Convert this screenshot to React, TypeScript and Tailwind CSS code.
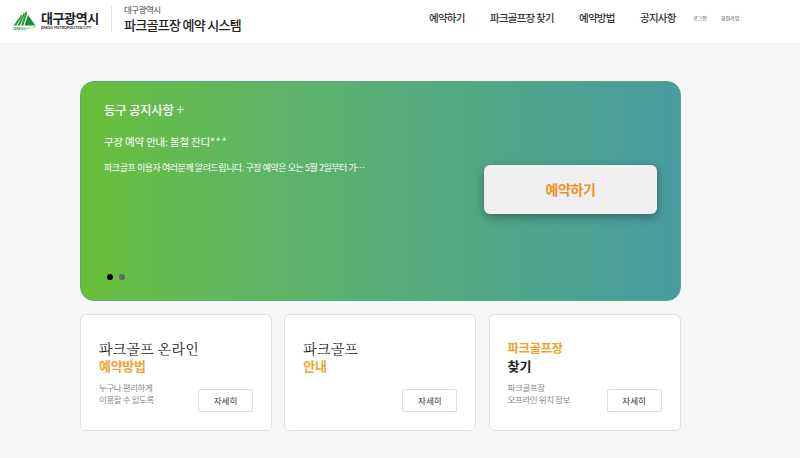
const KR = { fontFamily: '"Noto Sans CJK KR", "Noto Sans", sans-serif' };

function Logo() {
  return (
    <svg width="24" height="20" viewBox="0 0 24 20" className="shrink-0 mt-[-2px]">
      <path d="M0.5 14.5 L8.5 3.5 L9.5 4.5 L3.5 14.5 Z" fill="#2f9a40" />
      <path d="M4.5 14.5 L11 1.5 L12 3 L7 14.5 Z" fill="#2f9a40" />
      <path d="M8 14.5 L13 0 L14.2 2 L10.5 14.5 Z" fill="#2f9a40" />
      <path d="M11.5 14.5 L15 4 L22.5 14.5 Z" fill="#1f8a3a" />
      <path d="M14 17.5 Q20 17.5 23 15" stroke="#9cc84a" strokeWidth="0.8" fill="none" />
      <text x="0.5" y="19" fontSize="3.8" fontWeight="700" fill="#3b9a45" style={KR}>DAEGU</text>
    </svg>
  );
}

function Header() {
  const nav = ['예약하기', '파크골프장 찾기', '예약방법', '공지사항'];
  return (
    <header className="h-[43px] bg-white flex items-center pl-[13px]" style={KR}>
      <Logo />
      <div className="ml-[4px] flex flex-col w-[58px] mt-[-2px]">
        <span className="text-[13px] leading-[14px] font-bold text-[#222] tracking-[-0.4px] whitespace-nowrap">대구광역시</span>
        <span className="text-[3.6px] leading-[5px] font-bold text-[#333] whitespace-nowrap">DAEGU METROPOLITAN CITY</span>
      </div>
      <div className="ml-[12px] w-px h-[26px] bg-[#e4e4e4] mt-[-5px]" />
      <div className="ml-[12px] flex flex-col mt-[-8px]">
        <span className="text-[8.5px] leading-[14px] text-[#444] tracking-[-0.5px]">대구광역시</span>
        <span className="text-[13px] leading-[17px] font-medium text-[#222] tracking-[-0.7px] whitespace-nowrap">파크골프장 예약 시스템</span>
      </div>
      <nav className="ml-[188px] flex items-center gap-[25.5px] mt-[-8px]">
        {nav.map((n) => (
          <span key={n} className="text-[10.5px] font-medium text-[#333] tracking-[-0.8px] whitespace-nowrap">{n}</span>
        ))}
        <div className="flex items-center gap-[14px] ml-[-8px]">
          <span className="text-[5px] text-[#444] whitespace-nowrap">로그인</span>
          <span className="text-[5px] text-[#444] whitespace-nowrap">회원가입</span>
        </div>
      </nav>
    </header>
  );
}

function Hero() {
  return (
    <section className="h-[220px] rounded-[14px] border border-[#5aa778] bg-gradient-to-r from-[#6abf38] to-[#489b9f] pl-[23px] pr-[24px] pt-[18px] flex flex-col relative">
      <h2 className="text-[12.5px] leading-[18px] font-medium text-white tracking-[-0.3px]">
        동구 공지사항 <span className="font-light text-[15px] leading-[18px]">+</span>
      </h2>
      <p className="mt-[16px] text-[10.5px] leading-[14px] text-white tracking-[-0.2px]">
        구장 예약 안내: 봄철 잔디<span className="tracking-[1px]">***</span>
      </p>
      <p className="mt-[13px] text-[9px] leading-[12px] text-white tracking-[-0.45px]">파크골프 이용자 여러분께 알려드립니다. 구장 예약은 오는 5월 2일부터 가…</p>
      <button className="absolute left-[403px] top-[83px] w-[173px] h-[49px] rounded-[6px] bg-[#f0f0f0] shadow-[0_3px_10px_rgba(0,0,0,0.35)] text-[14px] font-bold text-[#ee8f1f] tracking-[-0.4px]">
        예약하기
      </button>
      <div className="mt-auto mb-[20px] ml-[3px] flex items-center gap-[6px]">
        <span className="w-[6px] h-[6px] rounded-full bg-black" />
        <span className="w-[6px] h-[6px] rounded-full bg-[#5d6a60]" />
      </div>
    </section>
  );
}

function Card({ first, second, firstOrange, desc }: { first: string; second: string; firstOrange?: boolean; desc: string[] }) {
  return (
    <div className="h-[117px] rounded-[6px] bg-white border border-[#dcdfe4] pl-[18px] pr-[18px] pt-[24px] flex flex-col relative">
      <p className={firstOrange ? 'text-[12.5px] leading-[18px] font-bold text-[#eca62f] tracking-[-0.5px]' : 'text-[14px] leading-[18px] text-[#222] font-["Noto_Serif_CJK_KR","Noto_Sans_CJK_KR",serif] tracking-[0.2px]'}>
        {first}
      </p>
      <p className={firstOrange ? 'text-[13px] leading-[18px] font-bold text-[#222]' : 'text-[13px] leading-[18px] font-bold text-[#eca62f] tracking-[-0.3px]'}>
        {second}
      </p>
      <div className="mt-[6px] text-[8.5px] leading-[12px] text-[#888] tracking-[-0.4px]">
        {desc.map((d) => (
          <div key={d}>{d}</div>
        ))}
      </div>
      <button className="absolute right-[18px] bottom-[18px] w-[55px] h-[23px] rounded-[2px] bg-white border border-[#dcdfe4] text-[8.5px] text-[#333]">
        자세히
      </button>
    </div>
  );
}

export default function App() {
  return (
    <div className="w-[800px] h-[458px] bg-[#f4f6f8] overflow-hidden" style={KR}>
      <Header />
      <main className="ml-[80px] w-[601px] pt-[38px]">
        <Hero />
        <div className="mt-[13px] grid grid-cols-[192px_192px_192px] gap-x-[12.3px]">
          <Card first="파크골프 온라인" second="예약방법" desc={['누구나 편리하게', '이용할 수 있도록']} />
          <Card first="파크골프" second="안내" desc={[]} />
          <Card first="파크골프장" second="찾기" firstOrange desc={['파크골프장', '오프라인 위치 정보']} />
        </div>
      </main>
    </div>
  );
}
